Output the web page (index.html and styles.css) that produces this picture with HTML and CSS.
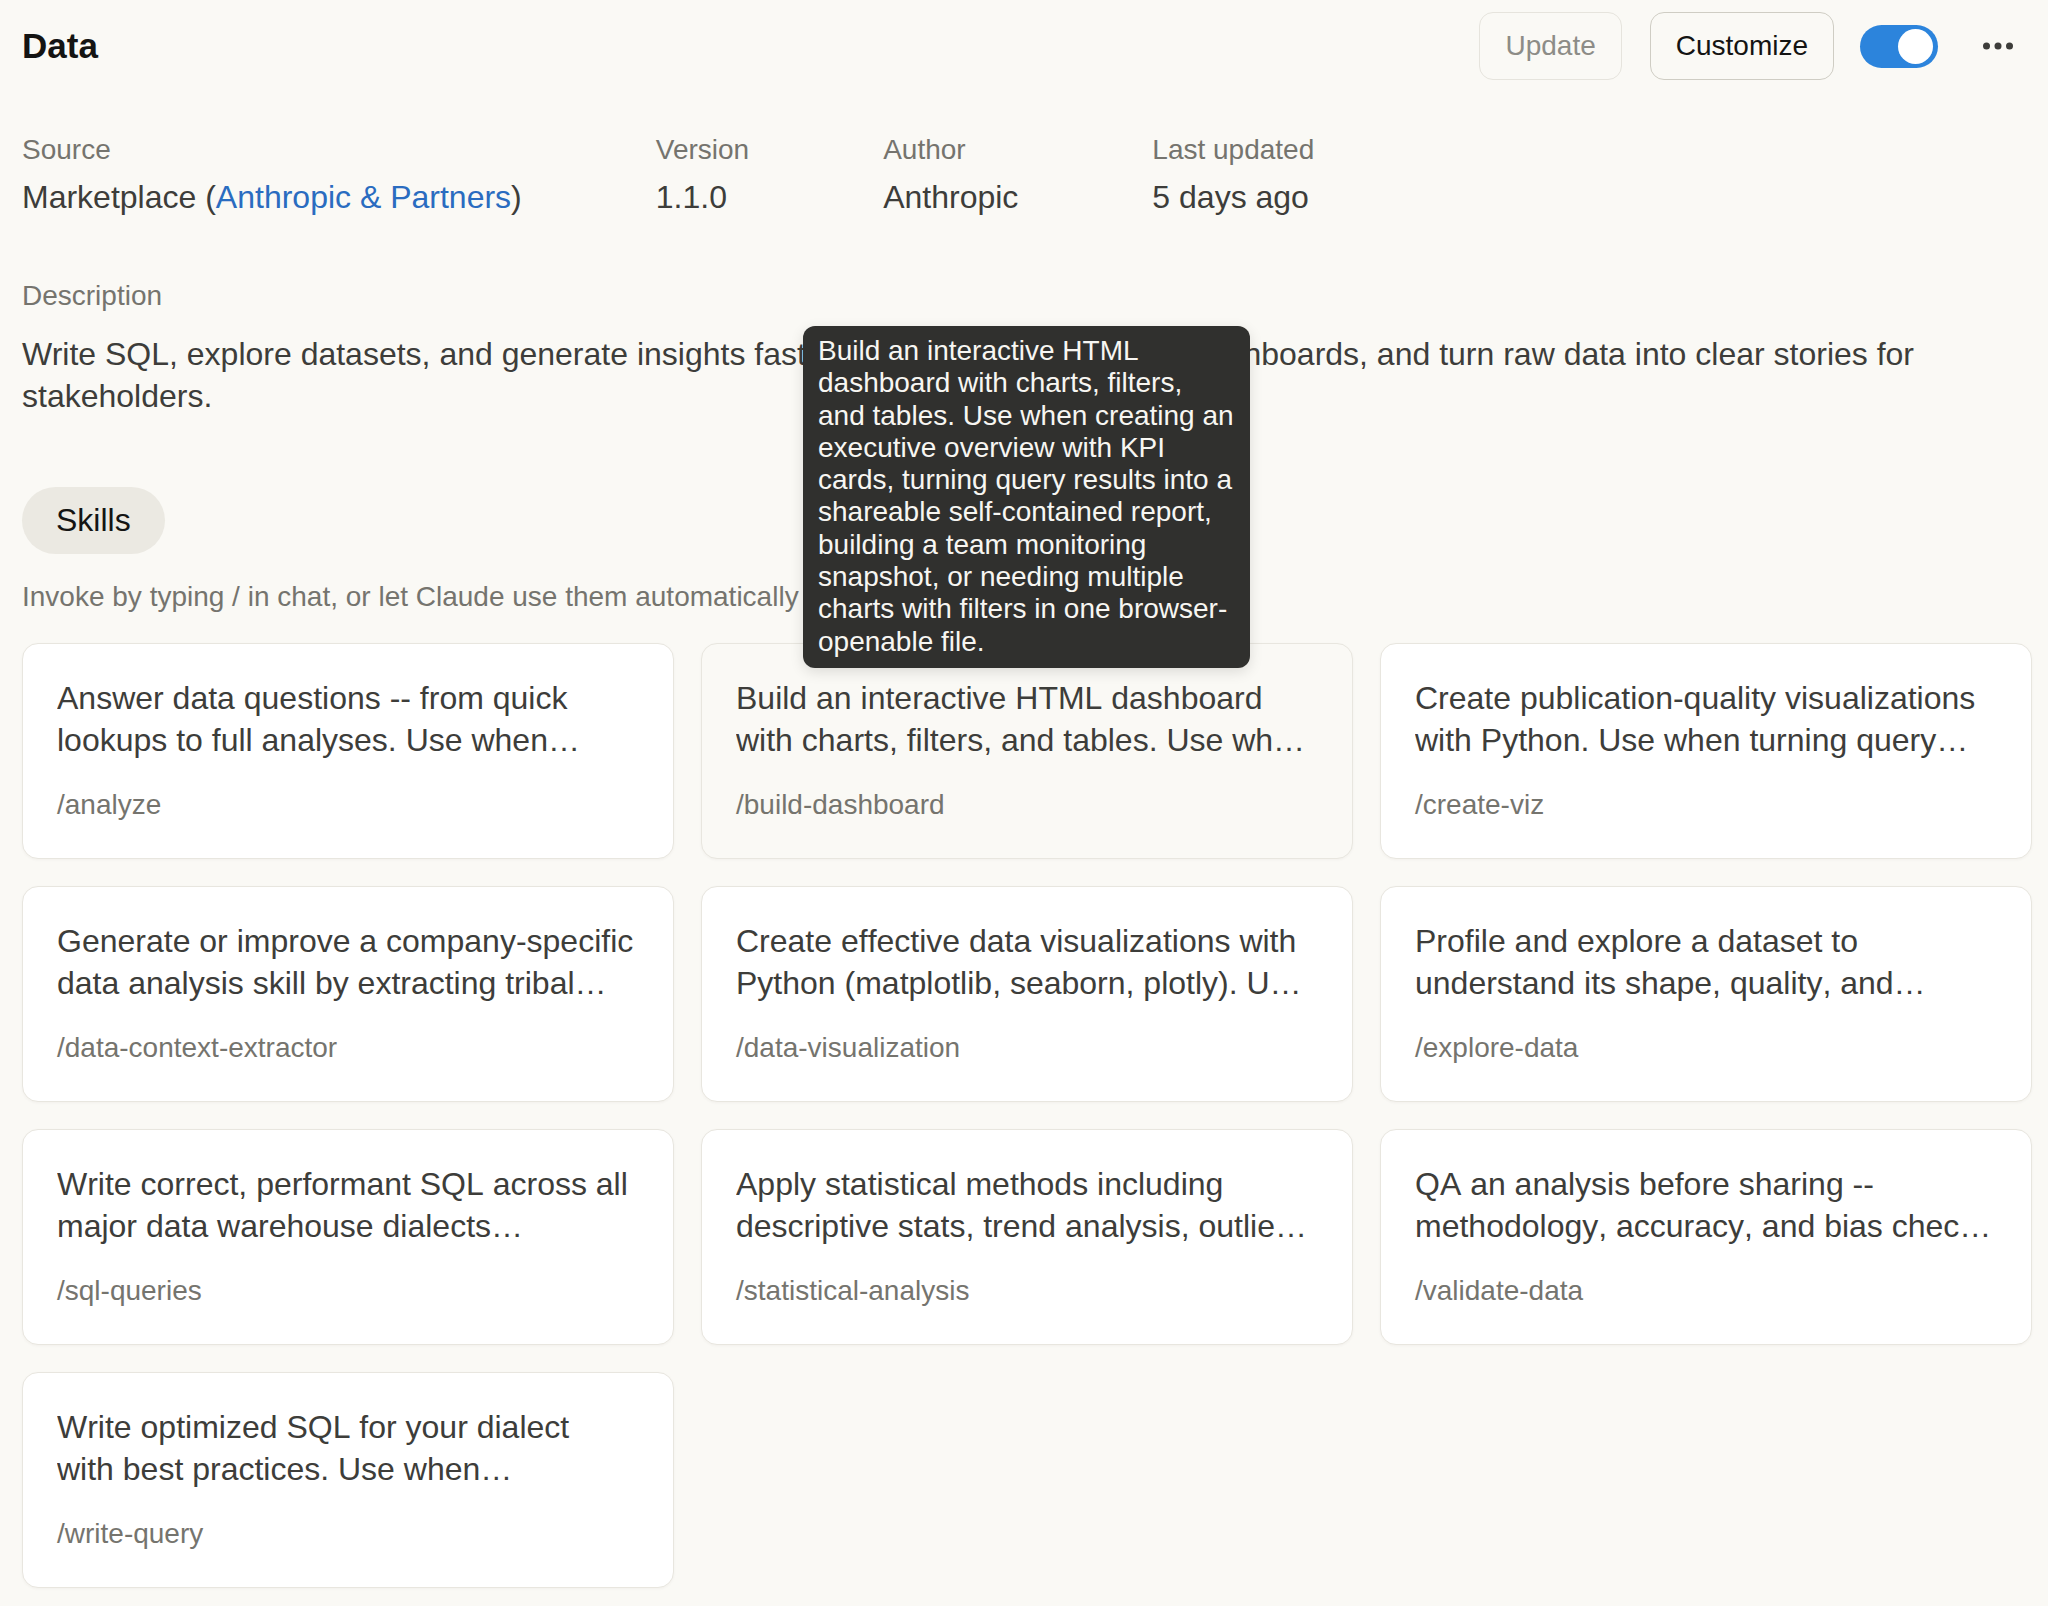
FILE: index.html
```html
<!DOCTYPE html>
<html lang="en">
<head>
<meta charset="utf-8">
<title>Data</title>
<link rel="stylesheet" href="styles.css">
</head>
<body>
<main class="page">
  <header class="page-header">
    <h1 class="title">Data</h1>
    <div class="actions">
      <button class="btn btn-disabled" disabled>Update</button>
      <button class="btn">Customize</button>
      <span class="toggle is-on"><span class="toggle-knob"></span></span>
      <button class="btn-icon" aria-label="More">
        <svg width="30" height="8" viewBox="0 0 30 8"><circle cx="3.5" cy="4" r="3.5"/><circle cx="15" cy="4" r="3.5"/><circle cx="26.5" cy="4" r="3.5"/></svg>
      </button>
    </div>
  </header>

  <section class="meta">
    <div class="meta-item">
      <div class="label">Source</div>
      <div class="value">Marketplace (<a class="link" href="#">Anthropic &amp; Partners</a>)</div>
    </div>
    <div class="meta-item">
      <div class="label">Version</div>
      <div class="value">1.1.0</div>
    </div>
    <div class="meta-item">
      <div class="label">Author</div>
      <div class="value">Anthropic</div>
    </div>
    <div class="meta-item">
      <div class="label">Last updated</div>
      <div class="value">5 days ago</div>
    </div>
  </section>

  <section class="description">
    <div class="label">Description</div>
    <p class="description-text">Write SQL, explore datasets, and generate insights faster. Build visualizations and dashboards, and turn raw data into clear stories for stakeholders.</p>
  </section>

  <section class="skills">
    <div class="tabs"><span class="tab">Skills</span></div>
    <p class="hint">Invoke by typing / in chat, or let Claude use them automatically for relevant tasks.</p>

    <div class="grid">
      <div class="card">
        <p class="card-text">Answer data questions -- from quick lookups to full analyses. Use when answering questions.</p>
        <div class="card-cmd">/analyze</div>
      </div>
      <div class="card is-hover">
        <p class="card-text">Build an interactive HTML dashboard with charts, filters, and tables. Use when creating overviews.</p>
        <div class="card-cmd">/build-dashboard</div>
      </div>
      <div class="card">
        <p class="card-text">Create publication-quality visualizations with Python. Use when turning query results into charts.</p>
        <div class="card-cmd">/create-viz</div>
      </div>
      <div class="card">
        <p class="card-text">Generate or improve a company-specific data analysis skill by extracting tribal knowledge.</p>
        <div class="card-cmd">/data-context-extractor</div>
      </div>
      <div class="card">
        <p class="card-text">Create effective data visualizations with Python (matplotlib, seaborn, plotly). Use when charting.</p>
        <div class="card-cmd">/data-visualization</div>
      </div>
      <div class="card">
        <p class="card-text">Profile and explore a dataset to understand its shape, quality, and distributions.</p>
        <div class="card-cmd">/explore-data</div>
      </div>
      <div class="card">
        <p class="card-text">Write correct, performant SQL across all major data warehouse dialects (Snowflake, BigQuery).</p>
        <div class="card-cmd">/sql-queries</div>
      </div>
      <div class="card">
        <p class="card-text">Apply statistical methods including descriptive stats, trend analysis, outlier detection.</p>
        <div class="card-cmd">/statistical-analysis</div>
      </div>
      <div class="card">
        <p class="card-text">QA an analysis before sharing -- methodology, accuracy, and bias check before stakeholders.</p>
        <div class="card-cmd">/validate-data</div>
      </div>
      <div class="card">
        <p class="card-text">Write optimized SQL for your dialect with best practices. Use when troubleshooting queries.</p>
        <div class="card-cmd">/write-query</div>
      </div>
    </div>
  </section>

  <div class="tooltip" role="tooltip">Build an interactive HTML dashboard with charts, filters, and tables. Use when creating an executive overview with KPI cards, turning query results into a shareable self-contained report, building a team monitoring snapshot, or needing multiple charts with filters in one browser-openable file.</div>
</main>
</body>
</html>
```

FILE: styles.css
```css
* { box-sizing: border-box; }

html, body {
  margin: 0;
  background: #faf9f5;
}

body {
  font-family: "Liberation Sans", Arial, sans-serif;
  color: #3d3d3a;
}

.page {
  position: relative;
  padding: 12px 16px 40px 22px;
}

/* header */
.page-header {
  display: flex;
  align-items: center;
  justify-content: space-between;
  height: 68px;
}

.title {
  margin: 0;
  font-size: 35px;
  font-weight: 700;
  color: #141413;
}

.actions {
  display: flex;
  align-items: center;
  gap: 26px;
}

.btn {
  height: 68px;
  padding: 0 25px;
  border: 1px solid #cfcdc4;
  border-radius: 14px;
  background: transparent;
  font: inherit;
  font-size: 28px;
  color: #141413;
}

.btn-disabled {
  border-color: #e6e4dd;
  color: #8d8c87;
  margin-right: 2px;
}

.toggle {
  position: relative;
  display: block;
  width: 78px;
  height: 43px;
  border-radius: 22px;
  background: #2c84dc;
}

.toggle-knob {
  position: absolute;
  top: 4px;
  right: 5px;
  width: 35px;
  height: 35px;
  border-radius: 50%;
  background: #fff;
}

.btn-icon {
  width: 68px;
  height: 68px;
  border: 0;
  background: transparent;
  display: flex;
  align-items: center;
  justify-content: center;
  padding: 0;
}

.btn-icon svg { fill: #3d3d3a; }

/* metadata */
.label {
  font-size: 28px;
  line-height: 36px;
  color: #75746e;
}

.value {
  font-size: 32px;
  line-height: 42px;
  color: #3d3d3a;
  margin-top: 8px;
}

.link {
  color: #2a6cc0;
  text-decoration: none;
}

.meta {
  display: flex;
  gap: 134px;
  margin-top: 52px;
}

.description {
  margin-top: 60px;
}

.description-text {
  margin: 19px 0 0;
  font-size: 32px;
  line-height: 42px;
}

/* skills */
.skills {
  margin-top: 70px;
}

.tabs { display: flex; }

.tab {
  display: inline-block;
  height: 67px;
  padding: 0 34px;
  border-radius: 34px;
  background: #ebe9e2;
  font-size: 32px;
  line-height: 67px;
  color: #141413;
}

.hint {
  margin: 25px 0 0;
  font-size: 28px;
  line-height: 36px;
  color: #75746e;
}

.grid {
  display: grid;
  grid-template-columns: repeat(3, 1fr);
  gap: 27px;
  margin-top: 28px;
}

.card {
  height: 216px;
  padding: 33px 39px 35px 34px;
  background: #fff;
  border: 1px solid #e8e6df;
  border-radius: 16px;
  box-shadow: 0 1px 3px rgba(40, 30, 10, 0.04);
}

.card.is-hover {
  background: #faf9f5;
}

.card-text {
  margin: 0;
  font-size: 32px;
  line-height: 42px;
  font-kerning: none;
  color: #3d3d3a;
  display: -webkit-box;
  -webkit-line-clamp: 2;
  -webkit-box-orient: vertical;
  overflow: hidden;
}

.card-cmd {
  margin-top: 26px;
  font-size: 28px;
  line-height: 36px;
  color: #75746e;
}

/* hover tooltip for the dashboard card */
.tooltip {
  position: absolute;
  left: 803px;
  top: 326px;
  width: 447px;
  padding: 9px 15px 10px 15px;
  background: #30302e;
  color: #f7f6f2;
  border-radius: 12px;
  font-size: 28px;
  line-height: 32.3px;
  font-kerning: none;
  box-shadow: 0 4px 14px rgba(0, 0, 0, 0.12);
}
```
